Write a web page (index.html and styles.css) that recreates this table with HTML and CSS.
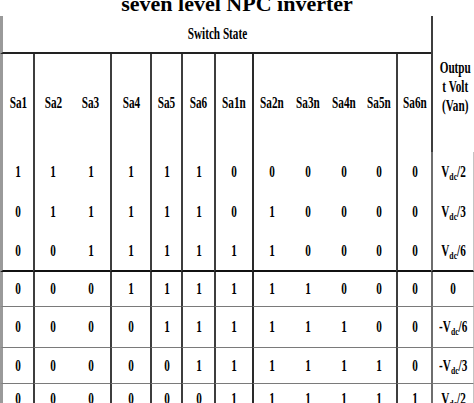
FILE: index.html
```html
<!DOCTYPE html>
<html lang="en">
<head>
<meta charset="utf-8">
<title>Seven level NPC inverter switching table</title>
<link rel="stylesheet" href="styles.css">
</head>
<body>
<div class="title">seven level NPC inverter</div>
<table class="grid">
  <colgroup>
    <col class="w33"><col class="w38"><col class="w39"><col class="w40"><col class="w31"><col class="w33">
    <col class="w38"><col class="w37"><col class="w37"><col class="w35"><col class="w35"><col class="w35"><col class="w43">
  </colgroup>
  <tr class="r-top">
    <td colspan="12" class="switch"><span class="t">Switch State</span></td>
    <td rowspan="2" class="out-h"><span class="t">Outpu<br>t Volt<br>(Van)</span></td>
  </tr>
  <tr class="r-head">
    <th><span class="t">Sa1</span></th><th><span class="t">Sa2</span></th><th><span class="t">Sa3</span></th>
    <th><span class="t">Sa4</span></th><th><span class="t">Sa5</span></th><th><span class="t">Sa6</span></th>
    <th><span class="t">Sa1n</span></th><th><span class="t">Sa2n</span></th><th><span class="t">Sa3n</span></th>
    <th><span class="t">Sa4n</span></th><th><span class="t">Sa5n</span></th><th><span class="t">Sa6n</span></th>
  </tr>
  <tr class="r-d1">
    <td><span class="t">1</span></td><td><span class="t">1</span></td><td><span class="t">1</span></td><td><span class="t">1</span></td><td><span class="t">1</span></td><td><span class="t">1</span></td>
    <td><span class="t">0</span></td><td><span class="t">0</span></td><td><span class="t">0</span></td><td><span class="t">0</span></td><td><span class="t">0</span></td><td><span class="t">0</span></td>
    <td><span class="t">V<sub>dc</sub>/2</span></td>
  </tr>
  <tr class="r-d2">
    <td><span class="t">0</span></td><td><span class="t">1</span></td><td><span class="t">1</span></td><td><span class="t">1</span></td><td><span class="t">1</span></td><td><span class="t">1</span></td>
    <td><span class="t">0</span></td><td><span class="t">1</span></td><td><span class="t">0</span></td><td><span class="t">0</span></td><td><span class="t">0</span></td><td><span class="t">0</span></td>
    <td><span class="t">V<sub>dc</sub>/3</span></td>
  </tr>
  <tr class="r-d3">
    <td><span class="t">0</span></td><td><span class="t">0</span></td><td><span class="t">1</span></td><td><span class="t">1</span></td><td><span class="t">1</span></td><td><span class="t">1</span></td>
    <td><span class="t">1</span></td><td><span class="t">1</span></td><td><span class="t">0</span></td><td><span class="t">0</span></td><td><span class="t">0</span></td><td><span class="t">0</span></td>
    <td><span class="t">V<sub>dc</sub>/6</span></td>
  </tr>
  <tr class="r-d4">
    <td><span class="t">0</span></td><td><span class="t">0</span></td><td><span class="t">0</span></td><td><span class="t">1</span></td><td><span class="t">1</span></td><td><span class="t">1</span></td>
    <td><span class="t">1</span></td><td><span class="t">1</span></td><td><span class="t">1</span></td><td><span class="t">0</span></td><td><span class="t">0</span></td><td><span class="t">0</span></td>
    <td><span class="t">0</span></td>
  </tr>
  <tr class="r-d5">
    <td><span class="t">0</span></td><td><span class="t">0</span></td><td><span class="t">0</span></td><td><span class="t">0</span></td><td><span class="t">1</span></td><td><span class="t">1</span></td>
    <td><span class="t">1</span></td><td><span class="t">1</span></td><td><span class="t">1</span></td><td><span class="t">1</span></td><td><span class="t">0</span></td><td><span class="t">0</span></td>
    <td><span class="t">-V<sub>dc</sub>/6</span></td>
  </tr>
  <tr class="r-d6">
    <td><span class="t">0</span></td><td><span class="t">0</span></td><td><span class="t">0</span></td><td><span class="t">0</span></td><td><span class="t">0</span></td><td><span class="t">1</span></td>
    <td><span class="t">1</span></td><td><span class="t">1</span></td><td><span class="t">1</span></td><td><span class="t">1</span></td><td><span class="t">1</span></td><td><span class="t">0</span></td>
    <td><span class="t">-V<sub>dc</sub>/3</span></td>
  </tr>
  <tr class="r-d7">
    <td><span class="t">0</span></td><td><span class="t">0</span></td><td><span class="t">0</span></td><td><span class="t">0</span></td><td><span class="t">0</span></td><td><span class="t">0</span></td>
    <td><span class="t">1</span></td><td><span class="t">1</span></td><td><span class="t">1</span></td><td><span class="t">1</span></td><td><span class="t">1</span></td><td><span class="t">1</span></td>
    <td><span class="t">V<sub>dc</sub>/2</span></td>
  </tr>
</table>
</body>
</html>
```

FILE: styles.css
```css
html, body {
  margin: 0;
  padding: 0;
  background: #ffffff;
}
body {
  width: 474px;
  height: 403px;
  overflow: hidden;
  font-family: "Liberation Serif", "Times New Roman", serif;
  color: #000;
}
.title {
  height: 16px;
  line-height: 8px;
  font-size: 22px;
  font-weight: bold;
  text-align: center;
  white-space: nowrap;
}
.grid {
  width: 474px;
  table-layout: fixed;
  border-collapse: separate;
  border-spacing: 0;
}
.w31 { width: 31px; }
.w33 { width: 33px; }
.w35 { width: 35px; }
.w37 { width: 37px; }
.w38 { width: 38px; }
.w39 { width: 39px; }
.w40 { width: 40px; }
.w43 { width: 43px; }

.grid td, .grid th {
  box-sizing: border-box;
  padding: 0;
  text-align: center;
  vertical-align: middle;
  font-size: 16px;
  font-weight: bold;
  white-space: nowrap;
  overflow: visible;
}
.t {
  display: inline-block;
  transform: scaleX(0.7);
  transform-origin: 50% 50%;
}
.t sub {
  font-size: 11px;
  vertical-align: -3px;
  line-height: 0;
}

/* vertical rules */
.grid tr > :first-child { border-left: 3px solid #9a9a9a; }
.grid tr > :nth-child(2),
.grid tr > :nth-child(4),
.grid tr > :nth-child(5),
.grid tr > :nth-child(6),
.grid tr > :nth-child(7),
.grid tr > :nth-child(12) { border-left: 2px solid #3d3d3d; }
.grid tr > :nth-child(8) { border-left: 2px solid #2a2a2a; }
.grid tr > :nth-child(13),
.grid .out-h { border-left: 2px solid #6e6e6e; }
.grid tr > :nth-child(13) { border-right: 1px solid #c4c4c4; }

/* header */
.r-top { height: 38px; }
.switch {
  border-bottom: 2px solid #222;
  padding-bottom: 3px;
}
.grid .out-h {
  line-height: 19px;
  vertical-align: top;
  padding-top: 42px;
}
.r-head { height: 98px; }

/* data rows */
.r-d1, .r-d2 { height: 40px; }
.r-d3 { height: 40px; }
.r-d3 > td { border-bottom: 2px solid #111; }
.r-d4 { height: 35px; }
.r-d5 { height: 41px; }
.r-d6 { height: 36px; }
.r-d7 { height: 30px; }
.r-d4 > td, .r-d5 > td, .r-d6 > td { border-bottom: 1px solid #7a7a7a; }
```
